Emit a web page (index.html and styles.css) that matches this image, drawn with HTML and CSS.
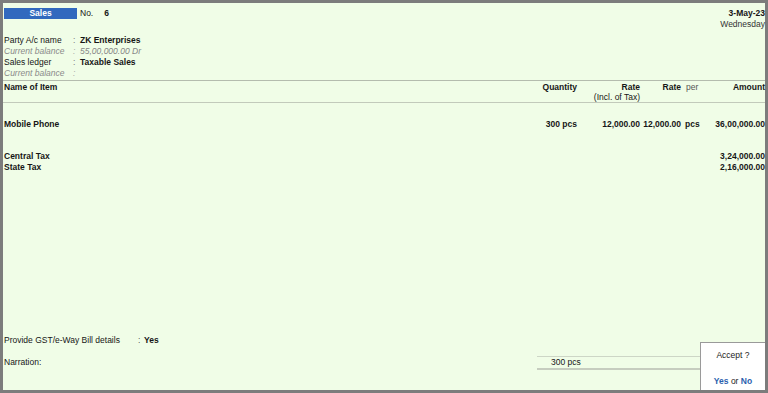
FILE: index.html
```html
<!DOCTYPE html>
<html>
<head>
<meta charset="utf-8">
<link rel="stylesheet" href="styles.css">
</head>
<body>
<div class="frame">
  <div class="top">
    <div class="top-left">
      <div class="vtype">Sales</div>
      <span class="no-label">No.</span>
      <span class="no-val">6</span>
    </div>
    <div class="top-right">
      <div class="date">3-May-23</div>
      <div class="day">Wednesday</div>
    </div>
  </div>

  <div class="party">
    <div class="prow"><span class="plabel">Party A/c name</span><span class="pcolon">:</span><span class="pval">ZK Enterprises</span></div>
    <div class="prow sub"><span class="plabel">Current balance</span><span class="pcolon">:</span><span class="pval">55,00,000.00 Dr</span></div>
    <div class="prow"><span class="plabel">Sales ledger</span><span class="pcolon">:</span><span class="pval">Taxable Sales</span></div>
    <div class="prow sub"><span class="plabel">Current balance</span><span class="pcolon">:</span><span class="pval"></span></div>
  </div>

  <div class="thead grid">
    <div class="c1 b">Name of Item</div>
    <div class="c2 b r">Quantity</div>
    <div class="c3 r"><div class="b">Rate</div><div>(Incl. of Tax)</div></div>
    <div class="c4 b r">Rate</div>
    <div class="c5 per-h">per</div>
    <div class="c6 b r">Amount</div>
  </div>

  <div class="items">
    <div class="grid item">
      <div class="b">Mobile Phone</div>
      <div class="b r">300 pcs</div>
      <div class="b r">12,000.00</div>
      <div class="b r">12,000.00</div>
      <div class="b per">pcs</div>
      <div class="b r">36,00,000.00</div>
    </div>
    <div class="taxes">
      <div class="grid tax">
        <div class="b">Central Tax</div><div></div><div></div><div></div><div></div>
        <div class="b r">3,24,000.00</div>
      </div>
      <div class="grid tax">
        <div class="b">State Tax</div><div></div><div></div><div></div><div></div>
        <div class="b r">2,16,000.00</div>
      </div>
    </div>
  </div>

  <div class="bottom">
    <div class="gst"><span class="gst-label">Provide GST/e-Way Bill details</span><span class="gst-colon">:</span><span class="b">Yes</span></div>
    <div class="narr">
      <span class="narr-label">Narration:</span>
      <span class="narr-val">300 pcs</span>
    </div>
  </div>

  <div class="accept">
    <div class="acc-q">Accept ?</div>
    <div class="acc-a"><span class="yn">Yes</span> or <span class="yn">No</span></div>
  </div>
</div>
</body>
</html>
```

FILE: styles.css
```css
* { box-sizing: border-box; }
html, body { margin: 0; padding: 0; }
body {
  width: 768px;
  height: 393px;
  overflow: hidden;
  font-family: "Liberation Sans", Arial, sans-serif;
  font-size: 8.5px;
  color: #161616;
}
.frame {
  position: relative;
  width: 768px;
  height: 393px;
  border: 3px solid #7c7c7c;
  background: #f0fde7;
  display: flex;
  flex-direction: column;
}
.b { font-weight: bold; }
.r { text-align: right; }

.top {
  display: flex;
  justify-content: space-between;
  padding-top: 5px;
  line-height: 11px;
  height: 27px;
  flex: none;
}
.top-left { display: flex; align-items: flex-start; padding-left: 1px; }
.vtype {
  width: 73px;
  height: 11px;
  background: #3169be;
  color: #fff;
  font-weight: bold;
  text-align: center;
}
.no-label { margin-left: 3px; }
.no-val { margin-left: 11px; font-weight: bold; }
.top-right { text-align: right; }
.date { font-weight: bold; }
.day { color: #333; }

.party {
  padding-left: 1px;
  line-height: 11px;
  padding-top: 5px;
  height: 50px;
  flex: none;
}
.prow { display: flex; height: 11px; }
.plabel { width: 69px; }
.pcolon { width: 7px; color: #777; }
.pval { font-weight: bold; }
.prow.sub { color: #8a8a8a; font-style: italic; }
.prow.sub .pval { font-weight: normal; color: #858585; }
.prow.sub .pcolon { color: #aaa; }

.grid {
  display: grid;
  grid-template-columns: 1fr 60px 63px 41px 30px 54px;
  padding-left: 1px;
}
.thead {
  border-top: 1px solid #b4bcae;
  border-bottom: 1px solid #c2cabb;
  line-height: 10px;
  padding-top: 1px;
  height: 23px;
  flex: none;
}
.per-h { padding-left: 5px; color: #555; }
.per { padding-left: 4px; }

.items { flex: 1; }
.item { line-height: 11px; margin-top: 16px; }
.taxes { margin-top: 21px; line-height: 11px; }

.bottom { padding-left: 1px; padding-bottom: 20px; line-height: 11px; flex: none; }
.gst { display: flex; height: 11px; }
.gst-label { width: 134px; }
.gst-colon { width: 6px; color: #555; }
.narr { display: flex; margin-top: 10px; align-items: flex-start; }
.narr-label { width: 533px; line-height: 11px; padding-top: 1px; }
.narr-val {
  width: 165px;
  border-top: 1px solid #cdd6c6;
  border-bottom: 2px solid #c6cdbf;
  padding-left: 14px;
  line-height: 11px;
}

.accept {
  position: absolute;
  right: 0;
  bottom: 0;
  width: 65px;
  height: 48px;
  background: #fff;
  border-left: 1px solid #9a9a9a;
  border-top: 1px solid #9a9a9a;
  text-align: center;
  color: #222;
}
.acc-q { margin-top: 7px; line-height: 11px; }
.acc-a { margin-top: 15px; line-height: 11px; }
.yn { color: #2c5fae; font-weight: bold; }
```
